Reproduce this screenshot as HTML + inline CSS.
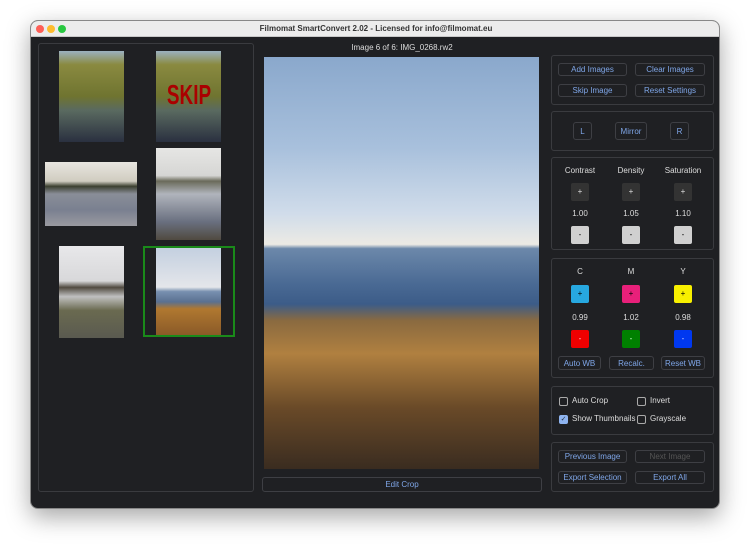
<!DOCTYPE html><html><head><style>
*{margin:0;padding:0;box-sizing:border-box}
body{width:750px;height:550px;background:#fff;font-family:"Liberation Sans",sans-serif;position:relative;overflow:hidden}
.a{position:absolute}
.win{left:30px;top:20px;width:690px;height:489px;background:#1f2023;border-radius:8px;box-shadow:0 8px 24px rgba(0,0,0,.35);overflow:hidden;border:1px solid #888}
.tb{left:0;top:0;width:690px;height:16px;background:#ececec;border-bottom:1px solid #c8c8c8;font-size:8px;font-weight:bold;color:#333;text-align:center;line-height:16px}
.dot{top:4px;width:8px;height:8px;border-radius:50%}
.grp{border:1px solid #3a3b3f;border-radius:3px}
.btn{border:1px solid #3e3f44;border-radius:3px;background:#1f2023;color:#7fa6e8;font-size:8px;text-align:center;line-height:12px}
.lbl{color:#ddd;font-size:8px;text-align:center}
.sq{width:18px;height:18px;border-radius:2px;font-size:8px;text-align:center;line-height:18px;color:#000}
.cb{width:9px;height:9px;border:1px solid #aaa;border-radius:2px}
</style></head><body>
<div class="a win">
<div class="a tb">Filmomat SmartConvert 2.02 - Licensed for info@filmomat.eu</div>
<div class="a dot" style="left:5px;background:#fe5f57"></div>
<div class="a dot" style="left:16px;background:#febc2e"></div>
<div class="a dot" style="left:27px;background:#28c840"></div>
</div>
<div class="a grp" style="left:38px;top:43px;width:216px;height:449px"></div>
<div class="a" style="left:59px;top:51px;width:65px;height:91px;background:linear-gradient(#9bb0c0 0%,#8a8a40 15%,#6f7430 50%,#5a6a60 65%,#2a3040 100%)"></div>
<div class="a" style="left:156px;top:51px;width:65px;height:91px;background:linear-gradient(#9bb0c0 0%,#8a8a40 15%,#6f7430 50%,#5a6a60 65%,#2a3040 100%)"></div>
<div class="a" style="left:158px;top:84px;width:62px;font:bold 21px 'Liberation Sans',sans-serif;color:#a00;text-align:center;transform:scale(0.9,1.3)">SKIP</div>
<div class="a" style="left:45px;top:162px;width:92px;height:64px;background:linear-gradient(#e8e6e0 0%,#d0ccc0 30%,#3c4030 38%,#8a8e98 50%,#7a8090 75%,#9a9aa0 100%)"></div>
<div class="a" style="left:156px;top:148px;width:65px;height:92px;background:linear-gradient(#e6e6e4 0%,#d6d6d4 30%,#6a6a5a 36%,#b0b4bc 50%,#6a7080 80%,#504a40 100%)"></div>
<div class="a" style="left:59px;top:246px;width:65px;height:92px;background:linear-gradient(#e8e8ea 0%,#d8d8da 38%,#504a40 45%,#c0c0c0 55%,#6a6a50 70%,#5a5a50 100%)"></div>
<div class="a" style="left:143px;top:246px;width:92px;height:91px;border:2px solid #1a8a1a"></div>
<div class="a" style="left:156px;top:248px;width:65px;height:87px;background:linear-gradient(#c4d0e0 0%,#e4e6ea 45%,#7890b0 50%,#5a7090 62%,#b07830 70%,#8a5a28 100%)"></div>
<div class="a lbl" style="left:262px;top:43px;width:280px;font-size:8px">Image 6 of 6: IMG_0268.rw2</div>
<div class="a" style="left:264px;top:57px;width:275px;height:412px;background:linear-gradient(#8aa8cc 0%,#a8c0dc 22%,#d0dcea 38%,#eceae4 45.5%,#6c88aa 46.5%,#4a6a94 55%,#3c5c88 60%,#8a6a40 64%,#b08040 72%,#6a4a28 85%,#3a2c20 100%)"></div>
<div class="a btn" style="left:262px;top:477px;width:280px;height:15px;line-height:14px">Edit Crop</div>
<div class="a grp" style="left:551px;top:55px;width:163px;height:50px"></div>
<div class="a btn" style="left:558px;top:63px;width:69px;height:13px">Add Images</div>
<div class="a btn" style="left:635px;top:63px;width:70px;height:13px">Clear Images</div>
<div class="a btn" style="left:558px;top:84px;width:69px;height:13px">Skip Image</div>
<div class="a btn" style="left:635px;top:84px;width:70px;height:13px">Reset Settings</div>
<div class="a grp" style="left:551px;top:111px;width:163px;height:40px"></div>
<div class="a btn" style="left:573px;top:122px;width:19px;height:18px;line-height:17px">L</div>
<div class="a btn" style="left:615px;top:122px;width:32px;height:18px;line-height:17px">Mirror</div>
<div class="a btn" style="left:670px;top:122px;width:19px;height:18px;line-height:17px">R</div>
<div class="a grp" style="left:551px;top:157px;width:163px;height:93px"></div>
<div class="a lbl" style="left:555px;top:166px;width:50px">Contrast</div>
<div class="a lbl" style="left:606px;top:166px;width:50px">Density</div>
<div class="a lbl" style="left:658px;top:166px;width:50px">Saturation</div>
<div class="a sq" style="left:571px;top:183px;background:#333;color:#ddd">+</div>
<div class="a sq" style="left:622px;top:183px;background:#333;color:#ddd">+</div>
<div class="a sq" style="left:674px;top:183px;background:#333;color:#ddd">+</div>
<div class="a lbl" style="left:560px;top:209px;width:40px">1.00</div>
<div class="a lbl" style="left:611px;top:209px;width:40px">1.05</div>
<div class="a lbl" style="left:663px;top:209px;width:40px">1.10</div>
<div class="a sq" style="left:571px;top:226px;background:#d0d0d0">-</div>
<div class="a sq" style="left:622px;top:226px;background:#d0d0d0">-</div>
<div class="a sq" style="left:674px;top:226px;background:#d0d0d0">-</div>
<div class="a grp" style="left:551px;top:258px;width:163px;height:120px"></div>
<div class="a lbl" style="left:560px;top:267px;width:40px">C</div>
<div class="a lbl" style="left:611px;top:267px;width:40px">M</div>
<div class="a lbl" style="left:663px;top:267px;width:40px">Y</div>
<div class="a sq" style="left:571px;top:285px;background:#27a8e0">+</div>
<div class="a sq" style="left:622px;top:285px;background:#e8207a">+</div>
<div class="a sq" style="left:674px;top:285px;background:#f8f000">+</div>
<div class="a lbl" style="left:560px;top:313px;width:40px">0.99</div>
<div class="a lbl" style="left:611px;top:313px;width:40px">1.02</div>
<div class="a lbl" style="left:663px;top:313px;width:40px">0.98</div>
<div class="a sq" style="left:571px;top:330px;background:#f00000;color:#fcc">-</div>
<div class="a sq" style="left:622px;top:330px;background:#008000;color:#cfc">-</div>
<div class="a sq" style="left:674px;top:330px;background:#0038f0;color:#ccf">-</div>
<div class="a btn" style="left:558px;top:356px;width:43px;height:14px;line-height:13px">Auto WB</div>
<div class="a btn" style="left:609px;top:356px;width:45px;height:14px;line-height:13px">Recalc.</div>
<div class="a btn" style="left:661px;top:356px;width:44px;height:14px;line-height:13px">Reset WB</div>
<div class="a grp" style="left:551px;top:386px;width:163px;height:49px"></div>
<div class="a cb" style="left:559px;top:397px"></div><div class="a lbl" style="left:572px;top:396px;text-align:left">Auto Crop</div>
<div class="a cb" style="left:637px;top:397px"></div><div class="a lbl" style="left:650px;top:396px;text-align:left">Invert</div>
<div class="a cb" style="left:559px;top:415px;background:#8fb4f0;border-color:#8fb4f0;font-size:7px;line-height:7px;color:#234;text-align:center">✓</div><div class="a lbl" style="left:572px;top:414px;text-align:left">Show Thumbnails</div>
<div class="a cb" style="left:637px;top:415px"></div><div class="a lbl" style="left:650px;top:414px;text-align:left">Grayscale</div>
<div class="a grp" style="left:551px;top:442px;width:163px;height:50px"></div>
<div class="a btn" style="left:558px;top:450px;width:69px;height:13px">Previous Image</div>
<div class="a btn" style="left:635px;top:450px;width:70px;height:13px;color:#555">Next Image</div>
<div class="a btn" style="left:558px;top:471px;width:69px;height:13px">Export Selection</div>
<div class="a btn" style="left:635px;top:471px;width:70px;height:13px">Export All</div>
</body></html>
